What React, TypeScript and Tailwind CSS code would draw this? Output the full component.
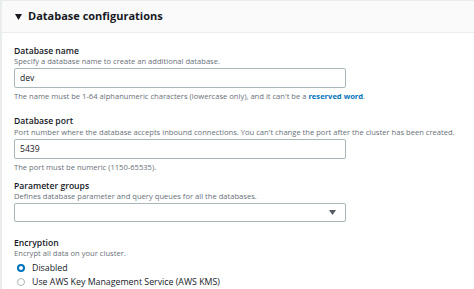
import React from 'react'

const labelCls = 'text-[8.6px] leading-[10px] font-semibold text-[#16191f]'
const descCls = 'text-[7.6px] leading-[10px] text-[#687078]'

function TextInput({ value, className }: { value: string; className: string }) {
  return (
    <div
      className={`flex w-[332px] items-center rounded-[2px] border border-[#aab7b8] bg-white px-[5px] text-[8.6px] text-[#16191f] ${className}`}
    >
      {value}
    </div>
  )
}

export default function App() {
  return (
    <div className="h-[289px] w-[474px] overflow-hidden bg-white font-['Open_Sans',sans-serif]">
      <div className="h-full border-l-2 border-t border-[#eaeded]">
        <div className="flex h-[32px] items-center border-b border-[#eaeded] bg-[#fafafa] pl-[13px]">
          <svg width="7" height="6" viewBox="0 0 7 6" className="mr-[6px]">
            <path d="M0 0 H7 L3.5 6 Z" fill="#16191f" />
          </svg>
          <span className="text-[11px] font-bold text-[#16191f]">Database configurations</span>
        </div>

        <div className="flex flex-col pl-[12px] pt-[13px]">
          <div className={labelCls}>Database name</div>
          <div className={descCls}>Specify a database name to create an additional database.</div>
          <TextInput value="dev" className="mt-[2px] h-[20px]" />
          <div className={`mt-[3px] ${descCls}`}>
            The name must be 1-64 alphanumeric characters (lowercase only), and it can't be a{' '}
            <span className="font-bold text-[#0073bb]">reserved word</span>.
          </div>

          <div className={`mt-[15px] ${labelCls}`}>Database port</div>
          <div className={`mt-[1px] whitespace-nowrap ${descCls}`}>
            Port number where the database accepts inbound connections. You can't change the port after the cluster has
            been created.
          </div>
          <TextInput value="5439" className="mt-[2px] h-[20px]" />
          <div className={`mt-[3px] ${descCls}`}>The port must be numeric (1150-65535).</div>

          <div className={`mt-[9px] ${labelCls}`}>Parameter groups</div>
          <div className={descCls}>Defines database parameter and query queues for all the databases.</div>
          <div className="mt-[2px] flex h-[19px] w-[332px] items-center justify-end rounded-[2px] border border-[#aab7b8] bg-white pr-[9px]">
            <svg width="7" height="5" viewBox="0 0 7 5">
              <path d="M0 0 H7 L3.5 5 Z" fill="#545b64" />
            </svg>
          </div>

          <div className={`mt-[16px] ${labelCls}`}>Encryption</div>
          <div className={descCls}>Encrypt all data on your cluster.</div>
          <div className="mt-[4px] flex items-center gap-[7px] pl-[3px] text-[8.8px] leading-[12px] text-[#16191f]">
            <span className="h-[8px] w-[8px] rounded-full border-[2.5px] border-[#0073bb] bg-white" />
            Disabled
          </div>
          <div className="mt-[2px] flex items-center gap-[7px] pl-[3px] text-[8.8px] leading-[12px] text-[#16191f]">
            <span className="h-[8px] w-[8px] rounded-full border border-[#aab7b8] bg-white" />
            Use AWS Key Management Service (AWS KMS)
          </div>
        </div>
      </div>
    </div>
  )
}
